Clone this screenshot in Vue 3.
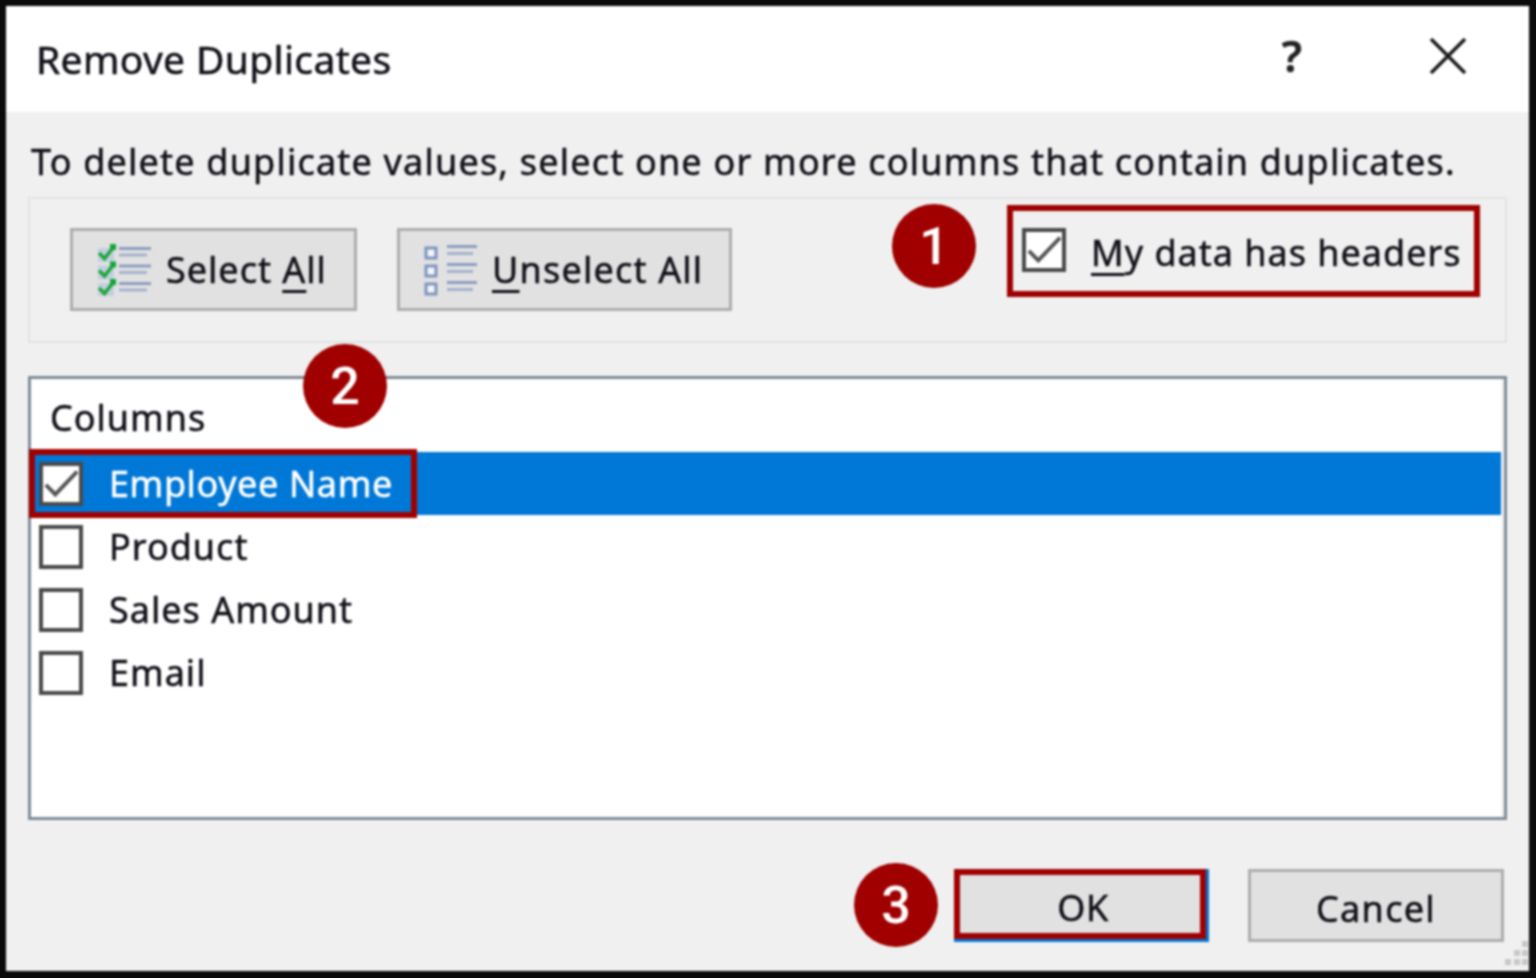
<script setup>
const rows = [
  { name: 'Employee Name', checked: true, selected: true },
  { name: 'Product' },
  { name: 'Sales Amount' },
  { name: 'Email' },
]
const listY = [0, 1, 2]
</script>

<template>
  <div class="frame">
    <div class="dialog">
      <header class="titlebar">
        <h1 class="title">Remove Duplicates</h1>
        <span class="help">?</span>
        <svg class="close" viewBox="0 0 38 38" width="38" height="38">
          <path d="M2 2 L36 36 M36 2 L2 36" stroke="#1c1c1c" stroke-width="3.6" fill="none" />
        </svg>
      </header>

      <main class="content">
        <p class="intro">To delete duplicate values, select one or more columns that contain duplicates.</p>

        <section class="group">
          <button class="btn select-all">
            <svg class="btn-icon" viewBox="0 0 54 52" width="54" height="52">
              <g v-for="i in listY" :key="i" :transform="`translate(0 ${i * 17.5})`">
                <rect x="0" y="4" width="16" height="14" fill="#c3cfe2" />
                <path d="M1 9 L6.5 14.5 L14 5" stroke="#1fa539" stroke-width="3.6" fill="none" />
                <rect x="12" y="0" width="6" height="6" fill="#12a63a" />
                <rect x="21" y="3" width="32" height="3" fill="#8d9dbf" />
                <rect x="21" y="9.5" width="28" height="3" fill="#a4b2cd" />
              </g>
            </svg>
            <span><span>Select </span><u>A</u>ll</span>
          </button>
          <button class="btn unselect-all">
            <svg class="btn-icon" viewBox="0 0 54 52" width="54" height="52">
              <g v-for="i in listY" :key="i" :transform="`translate(0 ${i * 18})`">
                <rect x="2" y="4" width="10" height="10" fill="#f3f5f9" stroke="#7f95bd" stroke-width="3" />
                <rect x="23" y="1" width="30" height="3" fill="#8d9dbf" />
                <rect x="23" y="8" width="26" height="3" fill="#a4b2cd" />
              </g>
            </svg>
            <span><u>U</u>nselect All</span>
          </button>
          <label class="headers-box">
            <span class="check">
              <svg viewBox="0 0 38 38" width="36" height="36"><path d="M3 20 L13 30 L36 6" stroke="#555" stroke-width="4" fill="none" /></svg>
            </span>
            <span class="headers-label"><u>M</u>y data has headers</span>
          </label>
        </section>

        <section class="list">
          <div class="list-inner">
            <div class="list-head">Columns</div>
            <div v-for="r in rows" :key="r.name" class="row" :class="{ selected: r.selected }">
              <span class="check">
                <svg v-if="r.checked" viewBox="0 0 38 38" width="36" height="36"><path d="M3 20 L13 30 L36 6" stroke="#555" stroke-width="4" fill="none" /></svg>
              </span>
              <span class="row-label">{{ r.name }}</span>
              <span v-if="r.selected" class="row-mark"></span>
            </div>
          </div>
        </section>

        <footer class="actions">
          <button class="action ok">OK</button>
          <button class="action">Cancel</button>
        </footer>
      </main>

      <svg class="grip" viewBox="0 0 24 24" width="24" height="24">
        <path d="M17 0h6v6h-6zM9 9h6v6H9zM17 9h6v6h-6zM0 18h6v6H0zM9 18h6v6H9zM17 18h6v6h-6z" fill="#c8c8c8" />
      </svg>

      <span class="badge b1">1</span>
      <span class="badge b2">2</span>
      <span class="badge b3">3</span>
    </div>
  </div>
</template>

<style>
html, body { margin: 0; background: #000; }
</style>

<style scoped>
.frame {
  width: 1536px;
  height: 978px;
  box-sizing: border-box;
  padding: 6px 7px 7px 6px;
  background: #0b0b0b;
  overflow: hidden;
  font-family: "Noto Sans", "Open Sans", sans-serif;
  color: #101018;
  -webkit-text-stroke: 0.5px currentColor;
}
.dialog {
  position: relative;
  height: 100%;
  background: #f0f0f0;
  filter: blur(1px);
}
.titlebar {
  height: 106px;
  background: #fff;
  display: flex;
  align-items: center;
  padding: 0 62px 0 30px;
}
.title {
  flex: 1;
  margin: 0 0 2px;
  font-size: 39px;
  font-weight: 400;
  letter-spacing: 0.35px;
}
.help {
  font-size: 44px;
  font-weight: 600;
  color: #222;
  margin-right: 127px;
  margin-bottom: 8px;
}
.close { margin-bottom: 6px; }
.content { padding: 0 22px; }
.intro {
  height: 85px;
  box-sizing: border-box;
  margin: 0;
  padding: 14px 0 0 3px;
  display: flex;
  align-items: center;
  font-size: 36px;
  letter-spacing: 1.2px;
  white-space: nowrap;
}
.group {
  height: 146px;
  box-sizing: border-box;
  border: 2px solid #e3e3e3;
  padding: 6px 25px 0 40px;
  display: flex;
  align-items: flex-start;
}
.btn {
  height: 83px;
  margin-top: 23px;
  box-sizing: border-box;
  background: #e1e1e1;
  border: 3px solid #adadad;
  display: flex;
  align-items: center;
  font: inherit;
  font-size: 36px;
  color: inherit;
  padding: 0;
}
.select-all { width: 287px; padding-left: 25px; gap: 14px; margin-right: 40px; letter-spacing: 1px; }
.unselect-all { width: 335px; padding-left: 24px; gap: 14px; letter-spacing: 1.2px; }
.btn-icon { flex: none; }
u { text-underline-offset: 7px; text-decoration-thickness: 3px; }
.headers-box {
  margin-left: auto;
  width: 473px;
  height: 92px;
  box-sizing: border-box;
  border: 6px solid #a00000;
  display: flex;
  align-items: center;
  padding: 0 0 0 9px;
  font-size: 36px;
  letter-spacing: 1px;
  white-space: nowrap;
}
.headers-box .check { margin-top: -2px; }
.headers-label { margin-left: 25px; margin-top: 2px; }
.check {
  width: 44px;
  height: 44px;
  box-sizing: border-box;
  border: 4px solid #4a4a4a;
  background: #fff;
  display: flex;
  flex: none;
}
.list {
  margin-top: 33px;
  height: 444px;
  box-sizing: border-box;
  border: 3px solid #808b96;
  background: #fff;
}
.list-inner {
  height: 100%;
  border-right: 3px solid #f2f2f2;
  box-sizing: border-box;
}
.list-head {
  height: 73px;
  box-sizing: border-box;
  padding: 14px 0 0 19px;
  font-size: 36px;
  letter-spacing: 1px;
}
.row {
  position: relative;
  height: 63px;
  display: flex;
  align-items: center;
  padding-left: 8px;
  font-size: 36px;
  letter-spacing: 1px;
}
.row-label { margin-left: 26px; }
.selected { background: #0078d7; color: #fff; letter-spacing: 0.6px; }
.row-mark {
  position: absolute;
  left: -2px;
  top: -3px;
  width: 388px;
  height: 69px;
  box-sizing: border-box;
  border: 6px solid #a00000;
}
.actions {
  margin-top: 49px;
  padding-right: 3px;
  display: flex;
  justify-content: flex-end;
  gap: 39px;
}
.action {
  width: 256px;
  height: 73px;
  box-sizing: border-box;
  background: #e1e1e1;
  border: 3px solid #adadad;
  font: inherit;
  font-size: 36px;
  letter-spacing: 1.3px;
  color: inherit;
  padding: 5px 0 0;
}
.ok {
  border: 6px solid #a00000;
  box-shadow: 0 3px 0 #0078d7, 3px 3px 0 #0078d7, 3px 0 0 #0078d7;
  height: 70px;
  margin-right: 3px;
  width: 252px;
  padding: 6px 0 0 6px;
  letter-spacing: 0.6px;
}
.grip { position: absolute; right: 0; bottom: 6px; }
.badge {
  position: absolute;
  width: 84px;
  height: 84px;
  border-radius: 50%;
  background: #a00000;
  color: #fff;
  -webkit-text-stroke: 0;
  display: flex;
  align-items: center;
  justify-content: center;
  font-size: 52px;
  font-weight: 500;
  font-family: Roboto, sans-serif;
}
.b1 { left: 886px; top: 198px; }
.b2 { left: 297px; top: 338px; }
.b3 { left: 848px; top: 857px; }
</style>
